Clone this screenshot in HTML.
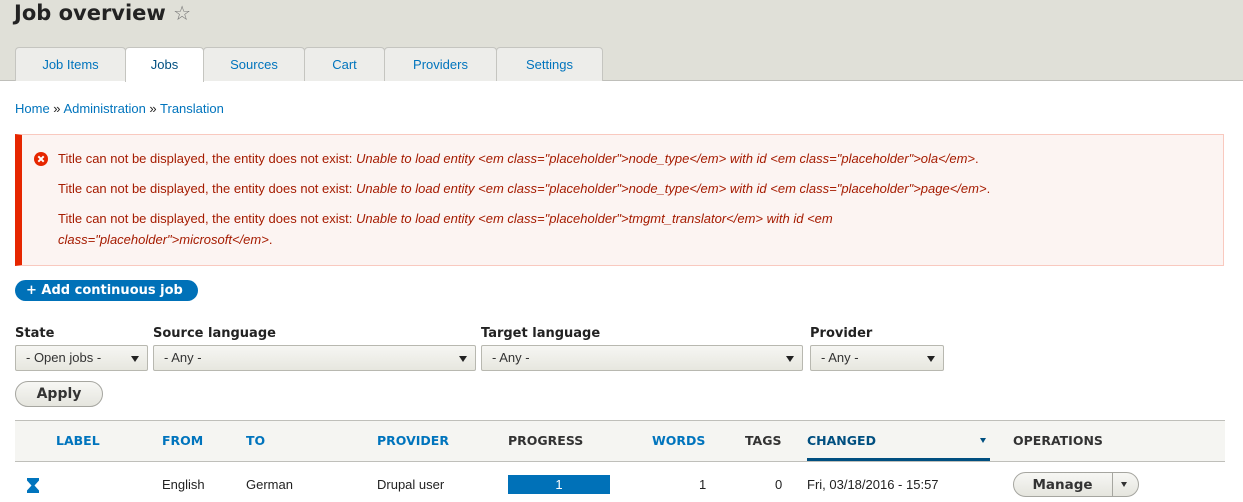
<!DOCTYPE html>
<html><head><meta charset="utf-8"><style>
*{box-sizing:border-box;margin:0;padding:0}
body{width:1243px;height:502px;overflow:hidden;background:#fff;font-family:"Liberation Sans","DejaVu Sans",sans-serif;font-size:13px;color:#222;position:relative}
.a{position:absolute;white-space:nowrap}
.b{font-family:"DejaVu Sans",sans-serif;font-weight:bold}
.hdr{position:absolute;left:0;top:0;width:1243px;height:81px;background:#e0e0d8;border-bottom:1px solid #bfbfba}
h1{position:absolute;left:14px;top:0;font-size:21px;font-weight:bold;color:#232323;line-height:26px;font-family:"DejaVu Sans",sans-serif}
.tab{position:absolute;top:47px;height:34px;background:#ededea;border:1px solid #c5c5c0;border-bottom:none;border-radius:4px 4px 0 0;color:#0074bd;text-align:center;line-height:34px;font-size:13px}
.tab.on{background:#fff;height:35px;color:#004f80}
a,.lnk{color:#0074bd;text-decoration:none}
.msg{position:absolute;left:15px;top:134px;width:1209px;height:132px;background:#fcf4f2;border:1px solid #f9c9bf;border-left:7px solid #e62600;color:#a51b00}
.sel{position:absolute;top:345px;height:26px;border:1px solid #b8b8b0;border-radius:2px;background:linear-gradient(#f6f6f3,#e7e7df);color:#333;padding-left:10px;line-height:24px}
.sel:after{content:"";position:absolute;right:8px;top:10px;border-left:4.5px solid transparent;border-right:4.5px solid transparent;border-top:6px solid #222}
.lbl{position:absolute;top:325px;font-weight:bold;color:#222;font-family:"DejaVu Sans",sans-serif;font-size:13px}
.th{position:absolute;top:433px;font-weight:bold;font-size:12.5px;color:#0074bd;font-family:"DejaVu Sans",sans-serif}
.td{position:absolute;top:477px;color:#222}
</style></head><body>
<div class="hdr"></div>
<h1>Job overview <span style="font-weight:normal;color:#777;font-size:20px">☆</span></h1>
<div class="tab" style="left:15px;width:111px">Job Items</div>
<div class="tab on" style="left:125px;width:79px">Jobs</div>
<div class="tab" style="left:203px;width:102px">Sources</div>
<div class="tab" style="left:304px;width:81px">Cart</div>
<div class="tab" style="left:384px;width:113px">Providers</div>
<div class="tab" style="left:496px;width:107px">Settings</div>
<div class="a" style="left:15px;top:101px"><a>Home</a> » <a>Administration</a> » <a>Translation</a></div>
<div class="msg"></div>
<svg class="a" style="left:34px;top:152px" width="14" height="14" viewBox="0 0 14 14"><circle cx="7" cy="7" r="7" fill="#e62600"/><path d="M4.3 4.3L9.7 9.7M9.7 4.3L4.3 9.7" stroke="#fff" stroke-width="2"/></svg>
<div class="a" style="left:58px;top:151px;color:#a51b00">Title can not be displayed, the entity does not exist: <i>Unable to load entity &lt;em class="placeholder"&gt;node_type&lt;/em&gt; with id &lt;em class="placeholder"&gt;ola&lt;/em&gt;</i>.</div>
<div class="a" style="left:58px;top:181px;color:#a51b00">Title can not be displayed, the entity does not exist: <i>Unable to load entity &lt;em class="placeholder"&gt;node_type&lt;/em&gt; with id &lt;em class="placeholder"&gt;page&lt;/em&gt;</i>.</div>
<div class="a" style="left:58px;top:211px;color:#a51b00">Title can not be displayed, the entity does not exist: <i>Unable to load entity &lt;em class="placeholder"&gt;tmgmt_translator&lt;/em&gt; with id &lt;em</i></div>
<div class="a" style="left:58px;top:232px;color:#a51b00"><i>class="placeholder"&gt;microsoft&lt;/em&gt;</i>.</div>
<div class="a b" style="left:15px;top:280px;width:183px;height:21px;border-radius:11px;background:#0071b8;color:#fff;font-size:13px;line-height:22px;padding-left:11px">+ Add continuous job</div>
<div class="lbl" style="left:15px;top:326px">State</div>
<div class="lbl" style="left:153px;top:326px">Source language</div>
<div class="lbl" style="left:481px;top:326px">Target language</div>
<div class="lbl" style="left:810px;top:326px">Provider</div>
<div class="sel" style="left:15px;width:133px">- Open jobs -</div>
<div class="sel" style="left:153px;width:323px">- Any -</div>
<div class="sel" style="left:481px;width:322px">- Any -</div>
<div class="sel" style="left:810px;width:134px">- Any -</div>
<div class="a b" style="left:15px;top:381px;width:88px;height:26px;border:1px solid #a6a6a0;border-radius:13px;background:linear-gradient(#f7f7f4,#e5e5de);font-size:14px;text-align:center;line-height:25px;color:#333">Apply</div>
<div class="a" style="left:15px;top:420px;width:1210px;height:42px;background:#f5f5f2;border-top:1px solid #bfbfba;border-bottom:1px solid #bfbfba"></div>
<div class="th" style="left:56px">LABEL</div>
<div class="th" style="left:162px">FROM</div>
<div class="th" style="left:246px">TO</div>
<div class="th" style="left:377px">PROVIDER</div>
<div class="th" style="left:508px;color:#333">PROGRESS</div>
<div class="th" style="left:652px">WORDS</div>
<div class="th" style="left:745px;color:#333">TAGS</div>
<div class="th" style="left:807px;color:#004f80">CHANGED</div>
<div class="a" style="left:980px;top:438px;border-left:3.5px solid transparent;border-right:3.5px solid transparent;border-top:5px solid #004f80"></div>
<div class="a" style="left:807px;top:458px;width:183px;height:3px;background:#004f80"></div>
<div class="th" style="left:1013px;color:#333">OPERATIONS</div>
<svg class="a" style="left:27px;top:478px" width="12" height="15" viewBox="0 0 12 15"><path d="M0 0H12V2.5L7.5 7.5L12 12.5V15H0V12.5L4.5 7.5L0 2.5Z" fill="#0074bd"/></svg>
<div class="td" style="left:162px">English</div>
<div class="td" style="left:246px">German</div>
<div class="td" style="left:377px">Drupal user</div>
<div class="a" style="left:508px;top:475px;width:102px;height:19px;background:#0071b8;color:#fff;text-align:center;line-height:19px">1</div>
<div class="td" style="left:699px">1</div>
<div class="td" style="left:775px">0</div>
<div class="td" style="left:807px">Fri, 03/18/2016 - 15:57</div>
<div class="a" style="left:1013px;top:472px;width:126px;height:25px;border:1px solid #a6a6a0;border-radius:13px;background:linear-gradient(#f7f7f4,#e5e5de)"></div>
<div class="a" style="left:1112px;top:473px;width:1px;height:23px;background:#a6a6a0"></div>
<div class="a b" style="left:1013px;top:477px;width:99px;text-align:center;font-size:13.5px;color:#333">Manage</div>
<div class="a" style="left:1121px;top:482px;border-left:3.5px solid transparent;border-right:3.5px solid transparent;border-top:5px solid #333"></div>
</body></html>
